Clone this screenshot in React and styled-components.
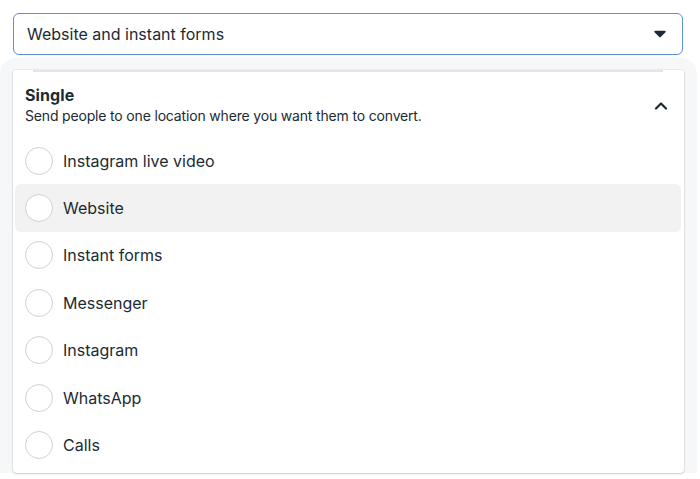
import React, { useState } from "react";
import styled, { createGlobalStyle } from "styled-components";

const GlobalStyle = createGlobalStyle`
  body {
    margin: 0;
    background: #ffffff;
    font-family: "Inter", "Roboto", sans-serif;
    color: #1c2b33;
  }
`;

const Page = styled.div`
  width: 700px;
  height: 479px;
  overflow: hidden;
  padding-top: 13px;
  box-sizing: border-box;
`;

const SelectBox = styled.button`
  display: flex;
  align-items: center;
  justify-content: space-between;
  width: 670px;
  height: 42px;
  margin-left: 13px;
  padding: 0 16px 0 13px;
  box-sizing: border-box;
  background: #fff;
  border: 1px solid #5f8fd6;
  border-radius: 6px;
  font-family: inherit;
  font-size: 16px;
  color: #1c2b33;
  cursor: pointer;
`;

const Popover = styled.div`
  margin-top: 3px;
  width: 697px;
  padding: 12px 13px 0 13px;
  box-sizing: border-box;
  background: #f6f7f8;
  border-radius: 16px 16px 0 0;
`;

const Panel = styled.div`
  position: relative;
  background: #fff;
  border-radius: 2px 2px 4px 4px;
  box-shadow: 0 1px 2px rgba(0, 0, 0, 0.18), 0 0 0 1px rgba(0, 0, 0, 0.04);
  padding-bottom: 4px;

  &::before {
    content: "";
    position: absolute;
    top: 0;
    left: 20px;
    right: 21px;
    height: 2px;
    background: #e4e6e9;
  }
`;

const Header = styled.div`
  display: flex;
  align-items: center;
  justify-content: space-between;
  padding: 15px 16px 12px 12px;
`;

const Title = styled.div`
  font-size: 16px;
  font-weight: 700;
  line-height: 20px;
  letter-spacing: 0.1px;
`;

const Subtitle = styled.div`
  font-size: 14px;
  line-height: 18px;
  margin-top: 2px;
  letter-spacing: -0.17px;
`;

const Options = styled.div`
  display: flex;
  flex-direction: column;
`;

const Option = styled.label`
  display: flex;
  align-items: center;
  gap: 10px;
  height: 47.4px;
  margin: 0 3px 0 2px;
  padding-left: 10px;
  border-radius: 6px;
  font-size: 16px;
  background: ${(p) => (p.$hover ? "#f2f2f2" : "transparent")};
  cursor: pointer;
`;

const Radio = styled.span`
  width: 28px;
  height: 28px;
  box-sizing: border-box;
  border-radius: 50%;
  border: 1px solid #cbd2d9;
  background: #fff;
  flex-shrink: 0;
`;

const Caret = () => (
  <svg width="12" height="8" viewBox="0 0 12 8">
    <path d="M1.2 0.8h9.6c0.8 0 1.2 0.9 0.7 1.5L6.7 7c-0.4 0.4-1 0.4-1.4 0L0.5 2.3C0 1.7 0.4 0.8 1.2 0.8z" fill="#1c2b33" />
  </svg>
);

const ChevronUp = () => (
  <svg width="14" height="9" viewBox="0 0 14 9">
    <path d="M2 7.5 7 2.5 12 7.5" fill="none" stroke="#1c2b33" strokeWidth="2.2" strokeLinecap="round" strokeLinejoin="round" />
  </svg>
);

const options = [
  "Instagram live video",
  "Website",
  "Instant forms",
  "Messenger",
  "Instagram",
  "WhatsApp",
  "Calls",
];

const App = () => {
  const [hovered] = useState("Website");

  return (
    <Page>
      <GlobalStyle />
      <SelectBox>
        <span>Website and instant forms</span>
        <Caret />
      </SelectBox>
      <Popover>
        <Panel>
          <Header>
            <div>
              <Title>Single</Title>
              <Subtitle>Send people to one location where you want them to convert.</Subtitle>
            </div>
            <ChevronUp />
          </Header>
          <Options>
            {options.map((o) => (
              <Option key={o} $hover={o === hovered}>
                <Radio />
                {o}
              </Option>
            ))}
          </Options>
        </Panel>
      </Popover>
    </Page>
  );
};

export default App;
